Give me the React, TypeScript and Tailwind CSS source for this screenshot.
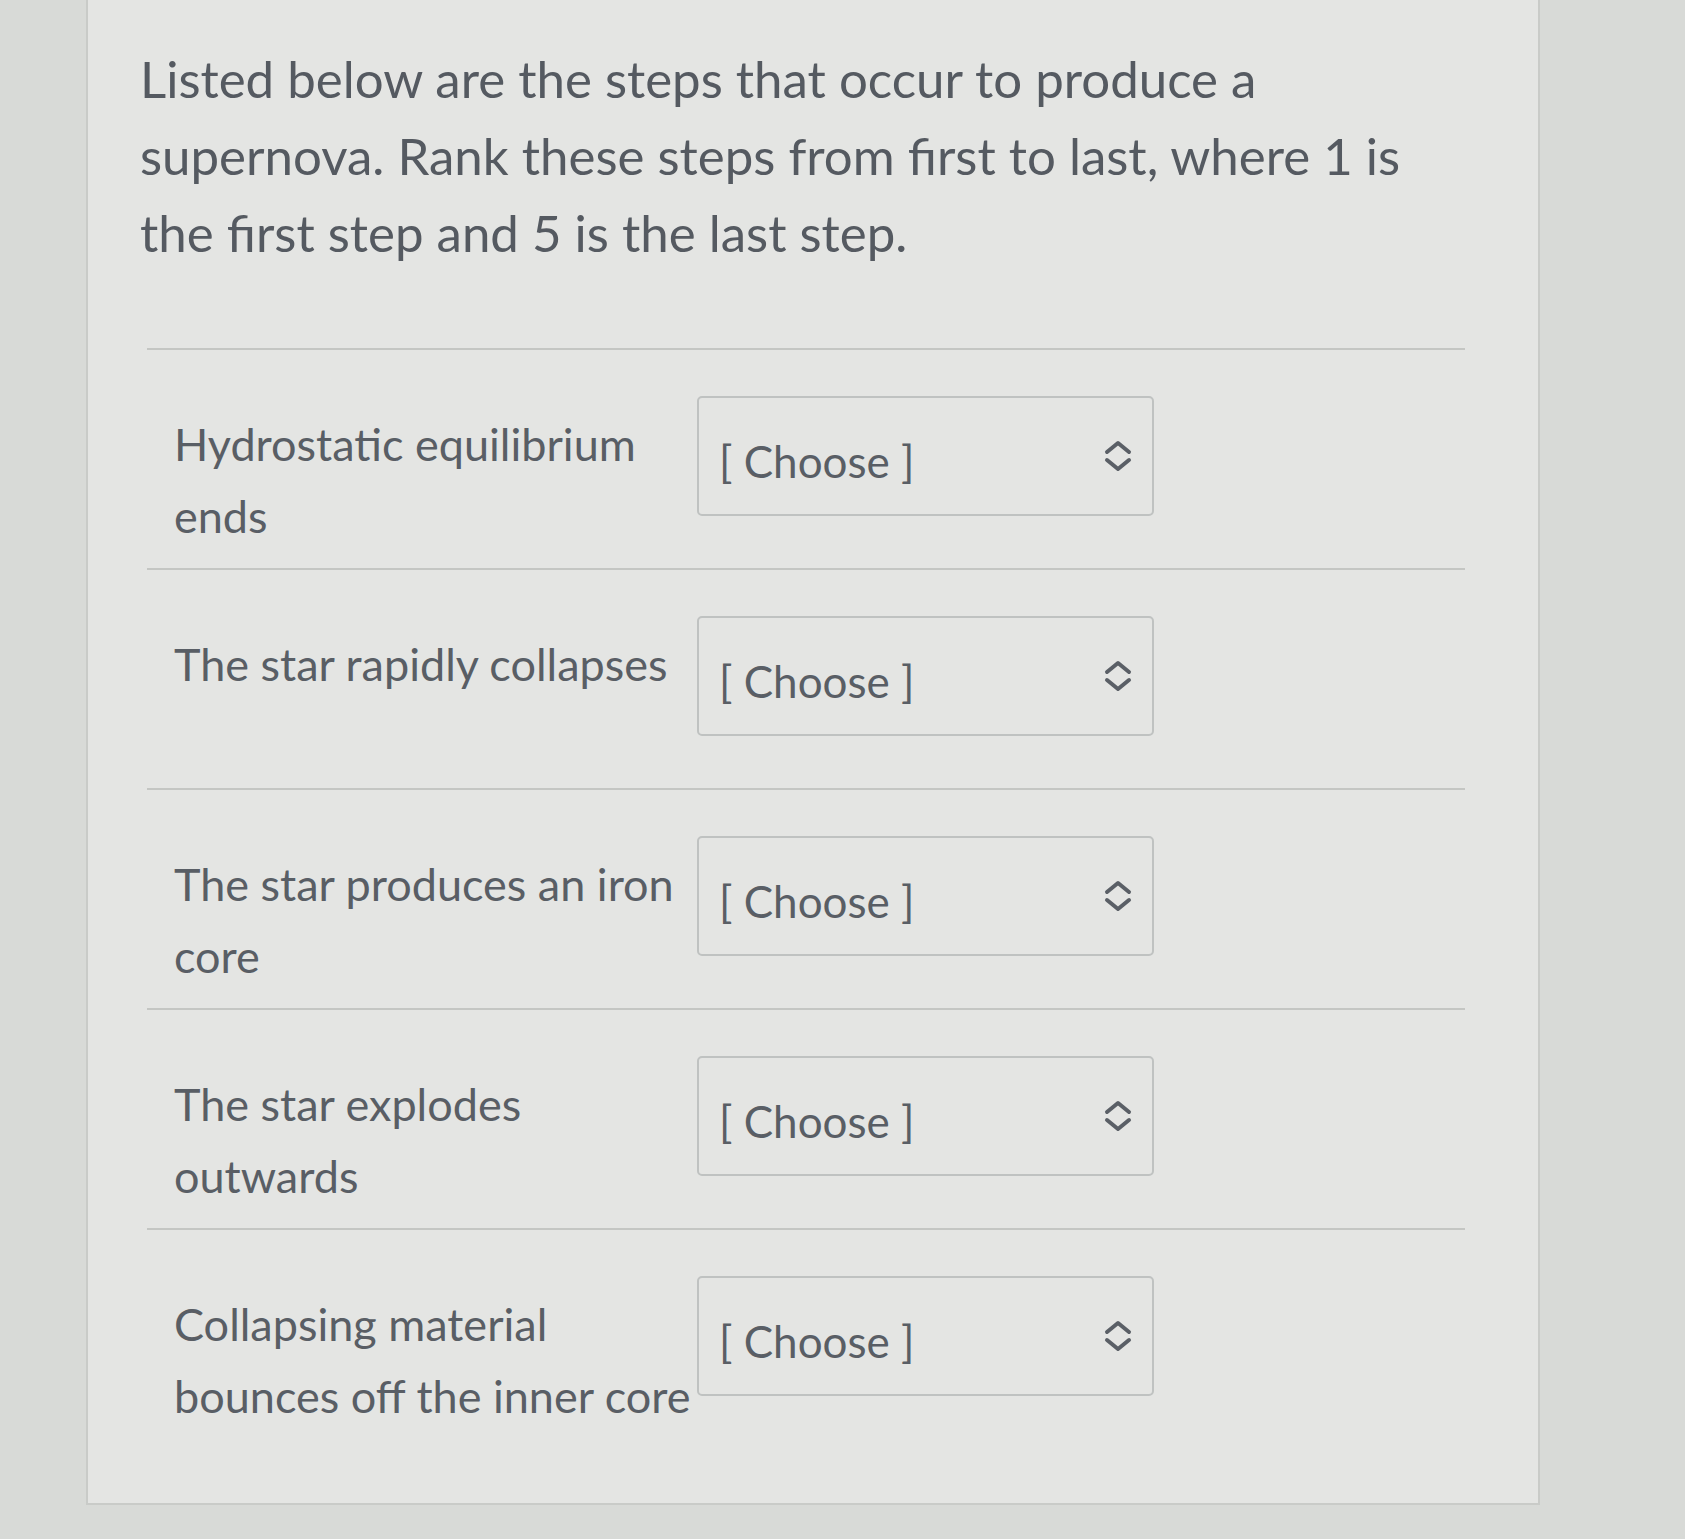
import React from "react";

const rows: string[][] = [
  ["Hydrostatic equilibrium", "ends"],
  ["The star rapidly collapses"],
  ["The star produces an iron", "core"],
  ["The star explodes", "outwards"],
  ["Collapsing material", "bounces off the inner core"],
];

function Chevrons() {
  return (
    <svg width="28" height="32" viewBox="0 0 28 32" fill="none" stroke="#5a5f66" strokeWidth="4" strokeLinecap="round" strokeLinejoin="round">
      <path d="M3 12 L14 3 L25 12" />
      <path d="M3 20 L14 29 L25 20" />
    </svg>
  );
}

export default function App() {
  return (
    <div
      className="w-full h-[1539px] bg-[#d8dad7] overflow-hidden"
      style={{ fontFamily: "Lato, 'Noto Sans', sans-serif" }}
    >
      <div className="ml-[86px] w-[1454px] h-[1505px] bg-[#e4e5e3] border-l-2 border-r-2 border-b-2 border-[#c9cbc8] pt-[40px]">
        <p className="ml-[52px] w-[1300px] text-[51px] leading-[77px] text-[#555a61]">
          Listed below are the steps that occur to produce a supernova. Rank these steps from first to last, where 1 is the first step and 5 is the last step.
        </p>
        <div className="ml-[59px] mr-[73px] mt-[77px]">
          {rows.map((lines, i) => (
            <div
              key={i}
              className="border-t-2 border-[#c4c6c3] pt-[46px] pl-[27px] h-[220px] flex items-start"
            >
              <div className="w-[523px] pt-[12px] text-[45px] leading-[72px] text-[#595e65]">
                {lines.map((l, j) => (
                  <div key={j} className="whitespace-nowrap">{l}</div>
                ))}
              </div>
              <div className="w-[457px] h-[120px] border-2 border-[#bfc2c1] rounded-[5px] flex items-center justify-between pl-[20px] pr-[20px]">
                <span className="text-[44px] leading-none text-[#595e65] mt-[10px]">[ Choose ]</span>
                <Chevrons />
              </div>
            </div>
          ))}
        </div>
      </div>
    </div>
  );
}
